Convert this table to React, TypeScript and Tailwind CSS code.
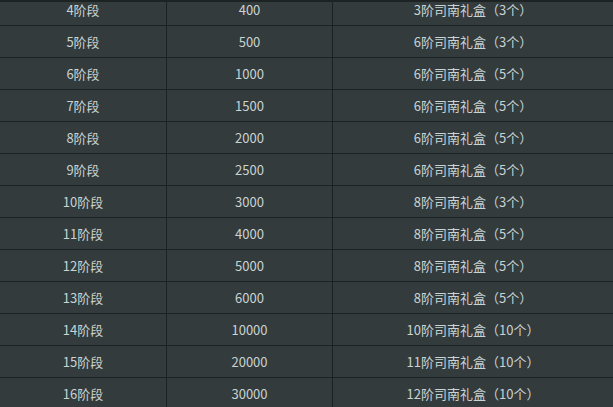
import React from "react";

interface StageRow {
  stage: string;
  points: string;
  reward: string;
}

const rows: StageRow[] = [
  { stage: "4阶段", points: "400", reward: "3阶司南礼盒（3个）" },
  { stage: "5阶段", points: "500", reward: "6阶司南礼盒（3个）" },
  { stage: "6阶段", points: "1000", reward: "6阶司南礼盒（5个）" },
  { stage: "7阶段", points: "1500", reward: "6阶司南礼盒（5个）" },
  { stage: "8阶段", points: "2000", reward: "6阶司南礼盒（5个）" },
  { stage: "9阶段", points: "2500", reward: "6阶司南礼盒（5个）" },
  { stage: "10阶段", points: "3000", reward: "8阶司南礼盒（3个）" },
  { stage: "11阶段", points: "4000", reward: "8阶司南礼盒（5个）" },
  { stage: "12阶段", points: "5000", reward: "8阶司南礼盒（5个）" },
  { stage: "13阶段", points: "6000", reward: "8阶司南礼盒（5个）" },
  { stage: "14阶段", points: "10000", reward: "10阶司南礼盒（10个）" },
  { stage: "15阶段", points: "20000", reward: "11阶司南礼盒（10个）" },
  { stage: "16阶段", points: "30000", reward: "12阶司南礼盒（10个）" },
];

const App: React.FC = () => {
  return (
    <div
      className="relative w-[613px] h-[407px] overflow-hidden bg-[#333b3c] text-[13px] text-[#c9d3d3]"
      style={{ fontFamily: '"Microsoft YaHei", "Noto Sans CJK SC", sans-serif' }}
    >
      {/* top edge of the scrolled table */}
      <div className="absolute top-0 left-0 right-0 h-[2px] bg-[#1d2223] z-10" />

      <div className="-mt-[6px]">
        {rows.map((row) => (
          <div
            key={row.stage}
            className="grid grid-cols-[167px_166px_1fr] h-[32px] border-b border-[#1c2122]"
          >
            <div className="flex items-center justify-center border-r border-[#1c2122] pt-px">
              {row.stage}
            </div>
            <div className="flex items-center justify-center border-r border-[#1c2122] pt-px">
              {row.points}
            </div>
            <div className="flex items-center justify-center pt-px">{row.reward}</div>
          </div>
        ))}
      </div>
    </div>
  );
};

export default App;
